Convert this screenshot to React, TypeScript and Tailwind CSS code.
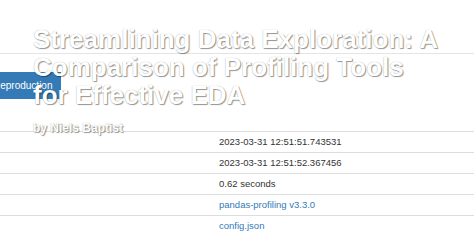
import React from 'react';

const rows: { value: string; link?: boolean }[] = [
  { value: '2023-03-31 12:51:51.743531' },
  { value: '2023-03-31 12:51:52.367456' },
  { value: '0.62 seconds' },
  { value: 'pandas-profiling v3.3.0', link: true },
  { value: 'config.json', link: true },
];

export default function App() {
  return (
    <div className="relative w-[474px] h-[248px] overflow-hidden bg-white font-['Liberation_Sans',Arial,sans-serif]">
      {/* page underneath */}
      <div className="pt-[53px]">
        <div className="h-px bg-[#e4e4e4]" />
        <div className="mt-[18px] w-[61px] h-[27px] overflow-hidden bg-[#337ab7] flex items-center">
          <span className="ml-[-7px] text-[10px] text-white whitespace-nowrap">Reproduction</span>
        </div>
        <div className="mt-[32px]">
          {rows.map((r) => (
            <div key={r.value} className="h-[21px] border-t border-[#dddddd] flex items-center pl-[219px]">
              <span className={`text-[9.5px] ${r.link ? 'text-[#337ab7]' : 'text-[#333333]'}`}>{r.value}</span>
            </div>
          ))}
        </div>
      </div>

      {/* title overlay */}
      <div className="absolute left-[33px] top-[25px] text-white font-bold [text-shadow:1px_1px_1px_rgba(0,0,0,0.4),0_0_1px_rgba(0,0,0,0.35)]">
        <h1 className="text-[26px] leading-[28px]">
          <span className="block whitespace-nowrap">Streamlining Data Exploration: A</span>
          <span className="block whitespace-nowrap">Comparison of Profiling Tools</span>
          <span className="block whitespace-nowrap">for Effective EDA</span>
        </h1>
        <p className="mt-[11px] text-[12px] leading-[16px]">by Niels Baptist</p>
      </div>
    </div>
  );
}
